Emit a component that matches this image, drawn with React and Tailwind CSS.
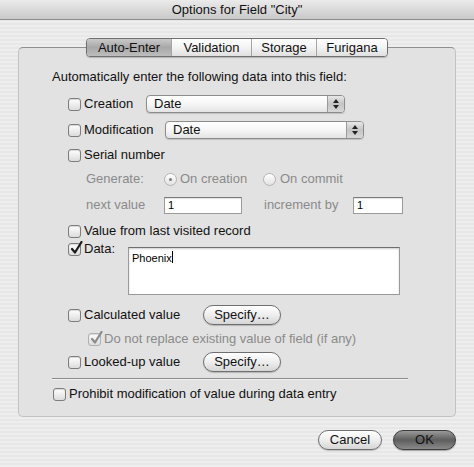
import React from 'react';

// little Aqua-style controls, greyscale like the screenshot

function CheckBox({ checked, disabled }) {
  return (
    <div
      className={`relative w-[13px] h-[13px] shrink-0 rounded-[3px] border ${
        disabled ? 'border-[#b0b0b0]' : 'border-[#7d7d7d]'
      } bg-gradient-to-b from-white to-[#dcdcdc] shadow-[inset_0_1px_1px_rgba(0,0,0,0.15)]`}
    >
      {checked && (
        <svg
          className="absolute left-[1px] top-[-3px]"
          width="13"
          height="14"
          viewBox="0 0 13 14"
        >
          <path
            d="M2 8 L5 11.5 L11.5 1"
            fill="none"
            stroke={disabled ? '#8a8a8a' : '#1a1a1a'}
            strokeWidth="2.2"
            strokeLinecap="round"
            strokeLinejoin="round"
          />
        </svg>
      )}
    </div>
  );
}

function Radio({ on }) {
  return (
    <div className="w-[13px] h-[13px] shrink-0 rounded-full border border-[#b4b4b4] bg-gradient-to-b from-white to-[#e2e2e2] flex items-center justify-center">
      {on && <div className="w-[3px] h-[3px] rounded-full bg-[#7a7a7a]" />}
    </div>
  );
}

function Popup({ width, value }) {
  return (
    <div
      className="h-[18px] flex rounded-[4px] border border-[#8c8c8c] bg-gradient-to-b from-white via-[#f6f6f6] to-[#e4e4e4] shadow-[0_1px_1px_rgba(0,0,0,0.15)] overflow-hidden"
      style={{ width }}
    >
      <div className="flex-1 pl-[7px] flex items-center text-[13px] text-[#111]">{value}</div>
      <div className="w-[17px] border-l border-[#9a9a9a] bg-gradient-to-b from-[#e8e8e8] via-[#c4c4c4] to-[#d8d8d8] flex flex-col items-center justify-center gap-[2px]">
        <svg width="6" height="4" viewBox="0 0 6 4">
          <path d="M0 4 L3 0 L6 4 Z" fill="#222" />
        </svg>
        <svg width="6" height="4" viewBox="0 0 6 4">
          <path d="M0 0 L3 4 L6 0 Z" fill="#222" />
        </svg>
      </div>
    </div>
  );
}

function TextInput({ width, value }) {
  return (
    <div
      className="h-[17px] bg-white border border-[#9b9b9b] border-t-[#7a7a7a] shadow-[inset_0_1px_1px_rgba(0,0,0,0.12)] pl-[3px] flex items-center text-[11px] text-black"
      style={{ width }}
    >
      {value}
    </div>
  );
}

function PillButton({ children, className = '' }) {
  return (
    <div
      className={`h-[20px] rounded-full border border-[#6f6f6f] bg-gradient-to-b from-white via-[#eeeeee] to-[#d6d6d6] shadow-[0_1px_1px_rgba(0,0,0,0.2)] flex items-center justify-center text-[13px] text-[#111] ${className}`}
    >
      {children}
    </div>
  );
}

function CheckRow({ label, checked, className = '', labelWidth, children }) {
  return (
    <div className={`flex items-center ml-[16px] ${className}`}>
      <CheckBox checked={checked} />
      <div className="ml-[3px] text-[13px] text-[#111]" style={labelWidth ? { width: labelWidth } : undefined}>
        {label}
      </div>
      {children}
    </div>
  );
}

const tabs = ['Auto-Enter', 'Validation', 'Storage', 'Furigana'];
const tabWidths = ['w-[84px]', 'w-[80px]', 'w-[65px]', 'w-[71px]'];

export default function App() {
  return (
    <div
      className="w-[474px] h-[467px] overflow-hidden flex flex-col bg-[repeating-linear-gradient(0deg,#eeeeee_0px,#eeeeee_2px,#e7e7e7_2px,#e7e7e7_4px)]"
      style={{ fontFamily: '"Liberation Sans", Arial, sans-serif' }}
    >
      {/* title bar */}
      <div className="h-[20px] shrink-0 border-b border-[#8e8e8e] bg-gradient-to-b from-[#ebebeb] to-[#c9c9c9] flex items-center justify-center text-[13px] text-[#111]">
        Options for Field "City"
      </div>

      <div className="px-[18px] pt-[18px]">
        {/* tabs */}
        <div className="relative z-10 flex justify-center">
          <div className="flex h-[19px] rounded-[4px] border border-[#707070] overflow-hidden shadow-[0_1px_1px_rgba(0,0,0,0.2)]">
            {tabs.map((t, i) => (
              <div
                key={t}
                className={`${tabWidths[i]} flex items-center justify-center text-[13px] text-[#111] ${
                  i > 0 ? 'border-l border-[#a5a5a5]' : ''
                } ${
                  i === 0
                    ? 'bg-gradient-to-b from-[#c9c9c9] via-[#a8a8a8] to-[#bdbdbd]'
                    : 'bg-gradient-to-b from-white via-[#f3f3f3] to-[#e0e0e0]'
                }`}
              >
                {t}
              </div>
            ))}
          </div>
        </div>

        {/* group box */}
        <div className="-mt-[10px] h-[370px] rounded-[5px] border border-[#c2c2c2] border-t-[#8f8f8f] bg-[#e2e2e2] pl-[33px] pt-[20px]">
          <div className="h-[18px] flex items-center text-[13px] text-[#111]">
            Automatically enter the following data into this field:
          </div>

          <CheckRow label="Creation" labelWidth={62} className="mt-[8px] h-[20px]">
            <Popup width={199} value="Date" />
          </CheckRow>

          <CheckRow label="Modification" labelWidth={81} className="mt-[6px] h-[20px]">
            <Popup width={199} value="Date" />
          </CheckRow>

          <CheckRow label="Serial number" className="mt-[7px] h-[16px]" />

          <div className="mt-[8px] h-[16px] ml-[34px] flex items-center text-[13px] text-[#8a8a8a]">
            <div className="w-[78px]">Generate:</div>
            <div className="w-[99px] flex items-center">
              <Radio on />
              <span className="ml-[3px]">On creation</span>
            </div>
            <div className="flex items-center">
              <Radio />
              <span className="ml-[4px]">On commit</span>
            </div>
          </div>

          <div className="mt-[9px] h-[18px] ml-[34px] flex items-center text-[13px] text-[#8a8a8a]">
            <div className="w-[78px]">next value</div>
            <TextInput width={78} value="1" />
            <div className="ml-[22px] w-[89px]">increment by</div>
            <TextInput width={50} value="1" />
          </div>

          <CheckRow label="Value from last visited record" className="mt-[9px] h-[16px]" />

          <div className="mt-[3px] h-[53px] ml-[16px] flex items-start">
            <div className="h-[14px] flex items-center">
              <CheckBox checked />
              <div className="ml-[3px] w-[44px] text-[13px] text-[#111]">Data:</div>
            </div>
            <div className="mt-[5px] w-[272px] h-[48px] bg-white border border-[#9a9a9a] border-t-[#6e6e6e] shadow-[inset_0_1px_2px_rgba(0,0,0,0.2)] pl-[3px] pt-[2px] text-[11px] text-black flex items-start">
              <span>Phoenix</span>
              <span className="mt-[1px] w-[1px] h-[12px] bg-black" />
            </div>
          </div>

          <CheckRow label="Calculated value" labelWidth={119} className="mt-[10px] h-[20px]">
            <PillButton className="w-[78px]">Specify…</PillButton>
          </CheckRow>

          <div className="mt-[6px] h-[16px] ml-[36px] flex items-center">
            <CheckBox checked disabled />
            <span className="ml-[3px] text-[13px] text-[#8a8a8a]">
              Do not replace existing value of field (if any)
            </span>
          </div>

          <CheckRow label="Looked-up value" labelWidth={119} className="mt-[5px] h-[20px]">
            <PillButton className="w-[78px]">Specify…</PillButton>
          </CheckRow>

          <div className="mt-[6px] w-[356px] border-t border-[#8a8a8a] border-b border-b-[#f2f2f2]" />

          <div className="mt-[6px] h-[16px] ml-[1px] flex items-center">
            <CheckBox />
            <span className="ml-[3px] text-[13px] text-[#111]">
              Prohibit modification of value during data entry
            </span>
          </div>
        </div>

        {/* bottom buttons */}
        <div className="mt-[13px] flex justify-end gap-[11px]">
          <PillButton className="w-[64px]">Cancel</PillButton>
          <div className="w-[63px] h-[20px] rounded-full border border-[#3c3c3c] bg-gradient-to-b from-[#9a9a9a] via-[#5e5e5e] to-[#8a8a8a] shadow-[0_1px_1px_rgba(0,0,0,0.3)] flex items-center justify-center text-[13px] text-[#111]">
            OK
          </div>
        </div>
      </div>
    </div>
  );
}
